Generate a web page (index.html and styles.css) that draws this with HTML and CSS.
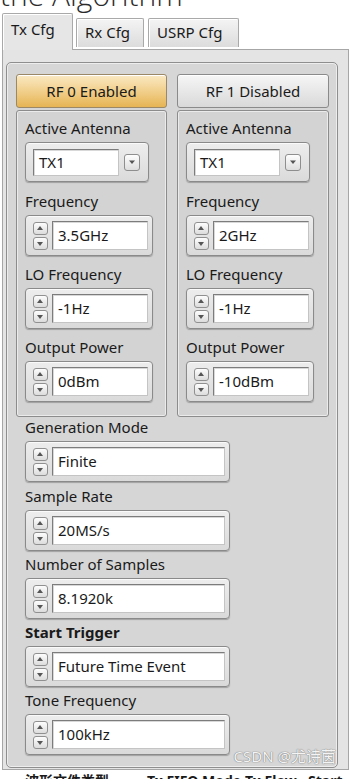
FILE: index.html
```html
<!DOCTYPE html>
<html lang="en">
<head>
    <meta charset="UTF-8">
    <meta name="viewport" content="width=device-width, initial-scale=1.0">
    <title>Tx Cfg</title>
    <link rel="stylesheet" href="styles.css">
</head>
<body>
    <div class="title"><span>the Algorithm</span></div>

    <div class="tabs">
        <div class="tab active">Tx Cfg</div>
        <div class="tab">Rx Cfg</div>
        <div class="tab wide">USRP Cfg</div>
    </div>

    <div class="panel">
        <div class="inner">
            <div class="rf">
                <div class="rf-col">
                    <div class="rf-btn on">RF 0 Enabled</div>
                    <div class="group">
                        <div class="lbl">Active Antenna</div>
                        <div class="ctl ring">
                            <div class="field">TX1</div>
                            <div class="drop"><svg width="8" height="6" viewBox="0 0 8 6"><path d="M1 1.5h6L4 5z" fill="#555"/></svg></div>
                        </div>
                        <div class="lbl">Frequency</div>
                        <div class="ctl num">
                            <div class="spin"><span class="up"></span><span class="down"></span></div>
                            <div class="field">3.5GHz</div>
                        </div>
                        <div class="lbl">LO Frequency</div>
                        <div class="ctl num">
                            <div class="spin"><span class="up"></span><span class="down"></span></div>
                            <div class="field">-1Hz</div>
                        </div>
                        <div class="lbl">Output Power</div>
                        <div class="ctl num">
                            <div class="spin"><span class="up"></span><span class="down"></span></div>
                            <div class="field">0dBm</div>
                        </div>
                    </div>
                </div>
                <div class="rf-col">
                    <div class="rf-btn">RF 1 Disabled</div>
                    <div class="group">
                        <div class="lbl">Active Antenna</div>
                        <div class="ctl ring">
                            <div class="field">TX1</div>
                            <div class="drop"><svg width="8" height="6" viewBox="0 0 8 6"><path d="M1 1.5h6L4 5z" fill="#555"/></svg></div>
                        </div>
                        <div class="lbl">Frequency</div>
                        <div class="ctl num">
                            <div class="spin"><span class="up"></span><span class="down"></span></div>
                            <div class="field">2GHz</div>
                        </div>
                        <div class="lbl">LO Frequency</div>
                        <div class="ctl num">
                            <div class="spin"><span class="up"></span><span class="down"></span></div>
                            <div class="field">-1Hz</div>
                        </div>
                        <div class="lbl">Output Power</div>
                        <div class="ctl num">
                            <div class="spin"><span class="up"></span><span class="down"></span></div>
                            <div class="field">-10dBm</div>
                        </div>
                    </div>
                </div>
            </div>

            <div class="lower">
                <div class="lbl">Generation Mode</div>
                <div class="ctl num long first">
                    <div class="spin"><span class="up"></span><span class="down"></span></div>
                    <div class="field">Finite</div>
                </div>
                <div class="lbl">Sample Rate</div>
                <div class="ctl num long">
                    <div class="spin"><span class="up"></span><span class="down"></span></div>
                    <div class="field">20MS/s</div>
                </div>
                <div class="lbl">Number of Samples</div>
                <div class="ctl num long">
                    <div class="spin"><span class="up"></span><span class="down"></span></div>
                    <div class="field">8.1920k</div>
                </div>
                <div class="lbl bold">Start Trigger</div>
                <div class="ctl num long">
                    <div class="spin"><span class="up"></span><span class="down"></span></div>
                    <div class="field">Future Time Event</div>
                </div>
                <div class="lbl">Tone Frequency</div>
                <div class="ctl num long">
                    <div class="spin"><span class="up"></span><span class="down"></span></div>
                    <div class="field">100kHz</div>
                </div>
            </div>
        </div>
        <div class="mark">CSDN @尤诗茵</div>
    </div>

    <div class="below">
        <span>波形文件类型</span>
        <span>Tx FIFO Mode</span>
        <span>Tx Flow</span>
        <span>Start</span>
    </div>
</body>
</html>
```

FILE: styles.css
```css
body {
    margin: 0;
    background-color: #fff;
    font-family: "Noto Sans", "Open Sans", Arial, sans-serif;
    color: #1a1a1a;
    overflow: hidden;
}

.title {
    height: 13px;
    overflow: hidden;
    font-family: "Open Sans", sans-serif;
    font-weight: 300;
    font-size: 30px;
    line-height: 30px;
    color: #2b2b2b;
}
.title span {
    display: block;
    margin-top: -20px;
}

/* tabs */
.tabs {
    display: flex;
    align-items: flex-end;
    height: 36px;
    padding-left: 2px;
    position: relative;
    z-index: 2;
}
.tab {
    box-sizing: border-box;
    width: 68px;
    height: 29px;
    margin-left: 3px;
    margin-bottom: 2px;
    padding-left: 8px;
    font-size: 15px;
    line-height: 27px;
    border: 1px solid #a9a9a9;
    border-bottom: none;
    border-radius: 2px 2px 0 0;
    background: linear-gradient(#f4f4f4, #dcdcdc);
    box-shadow: inset 1px 1px 0 #fff;
}
.tab.active {
    width: 71px;
    height: 37px;
    margin-left: 0;
    margin-bottom: -1px;
    padding-left: 8px;
    line-height: 31px;
    background: #e6e6e6;
}
.tab.wide {
    width: 91px;
    margin-left: 4px;
}

/* main panel */
.panel {
    position: relative;
    margin: 0 2px 0 2px;
    padding: 12px 10px 1px 3px;
    border: 1px solid #a6a6a6;
    background: #e4e4e4;
}
.inner {
    padding: 11px 8px 12px 9px;
    border: 1px solid #8e8e8e;
    border-radius: 5px;
    background: #d6d6d6;
    box-shadow: inset 0 0 0 1px #ededed;
}

.rf {
    display: grid;
    grid-template-columns: 151px 152px;
    column-gap: 10px;
}
.rf-btn {
    box-sizing: border-box;
    height: 34px;
    text-align: center;
    font-size: 15px;
    line-height: 32px;
    border: 1px solid #8a8a8a;
    border-radius: 3px;
    background: linear-gradient(#f6f6f6, #d9d9d9);
    box-shadow: inset 0 1px 0 #fff;
}
.rf-btn.on {
    border-color: #9a8866;
    background: linear-gradient(#fbe9c4, #f0cd86 55%, #e6b453);
}
.group {
    margin-top: 2px;
    padding: 7px 8px 14px 8px;
    border: 1px solid #8c8c8c;
    border-radius: 3px;
    background: #d3d3d3;
    box-shadow: inset 0 0 0 1px #ebebeb;
}

.lbl {
    font-size: 15px;
    line-height: 20px;
    height: 20px;
    margin-bottom: 4px;
    white-space: nowrap;
}
.bold {
    font-weight: bold;
}

/* controls */
.ctl {
    box-sizing: border-box;
    display: flex;
    align-items: center;
    height: 41px;
    margin-bottom: 8px;
    padding: 0 4px 0 7px;
    border: 1px solid #8a8a8a;
    border-radius: 4px;
    background: linear-gradient(#ededed, #dadada);
    box-shadow: inset 0 1px 0 #fafafa, 0 1px 1px rgba(0, 0, 0, 0.25);
}
.group .ctl:last-child {
    margin-bottom: 0;
}
.ctl.num {
    width: 128px;
}
.ctl.ring {
    width: 124px;
    height: 40px;
    margin-top: 1px;
    margin-bottom: 9px;
}
.ctl.long {
    width: 205px;
    margin-bottom: 3px;
}
.ctl.long.first {
    margin-bottom: 4px;
}

.field {
    box-sizing: border-box;
    flex: 1;
    height: 29px;
    padding-left: 5px;
    font-size: 15px;
    line-height: 27px;
    background: #fff;
    border: 1px solid #c4c4c4;
    border-top-color: #7c7c7c;
    border-left-color: #7c7c7c;
    box-shadow: inset 1px 1px 0 #d8d8d8;
    white-space: nowrap;
}
.ring .field {
    flex: none;
    width: 86px;
    height: 27px;
    line-height: 25px;
}
.drop {
    box-sizing: border-box;
    width: 16px;
    height: 17px;
    margin-left: 5px;
    display: flex;
    align-items: center;
    justify-content: center;
    border: 1px solid #8e8e8e;
    border-radius: 3px;
    background: linear-gradient(#fdfdfd, #dedede);
}

.spin {
    display: flex;
    flex-direction: column;
    gap: 2px;
    margin-right: 4px;
}
.spin span {
    box-sizing: border-box;
    position: relative;
    display: block;
    width: 15px;
    height: 13px;
    border: 1px solid #909090;
    border-radius: 3px;
    background: linear-gradient(#fdfdfd, #dcdcdc);
}
.spin span::after {
    content: "";
    position: absolute;
    left: 3px;
    border-left: 3.5px solid transparent;
    border-right: 3.5px solid transparent;
}
.spin .up::after {
    top: 3px;
    border-bottom: 4px solid #555;
}
.spin .down::after {
    top: 4px;
    border-top: 4px solid #555;
}

.lower {
    padding-left: 9px;
}
.lower .ctl:last-child {
    margin-bottom: 0;
}

.mark {
    position: absolute;
    right: 12px;
    bottom: 3px;
    font-family: "Noto Sans", "Noto Sans CJK SC", sans-serif;
    font-size: 15px;
    color: #f4f4f4;
    text-shadow: 0 0 1px #7a7a7a, 0 0 1px #7a7a7a;
}

.below {
    display: grid;
    grid-template-columns: 122px 98px 63px auto;
    padding: 1px 0 0 25px;
    font-family: "Noto Sans", "Noto Sans CJK SC", sans-serif;
    font-size: 14px;
    font-weight: bold;
    line-height: 20px;
    white-space: nowrap;
}
.below span {
    overflow: hidden;
    padding-right: 6px;
}
```
